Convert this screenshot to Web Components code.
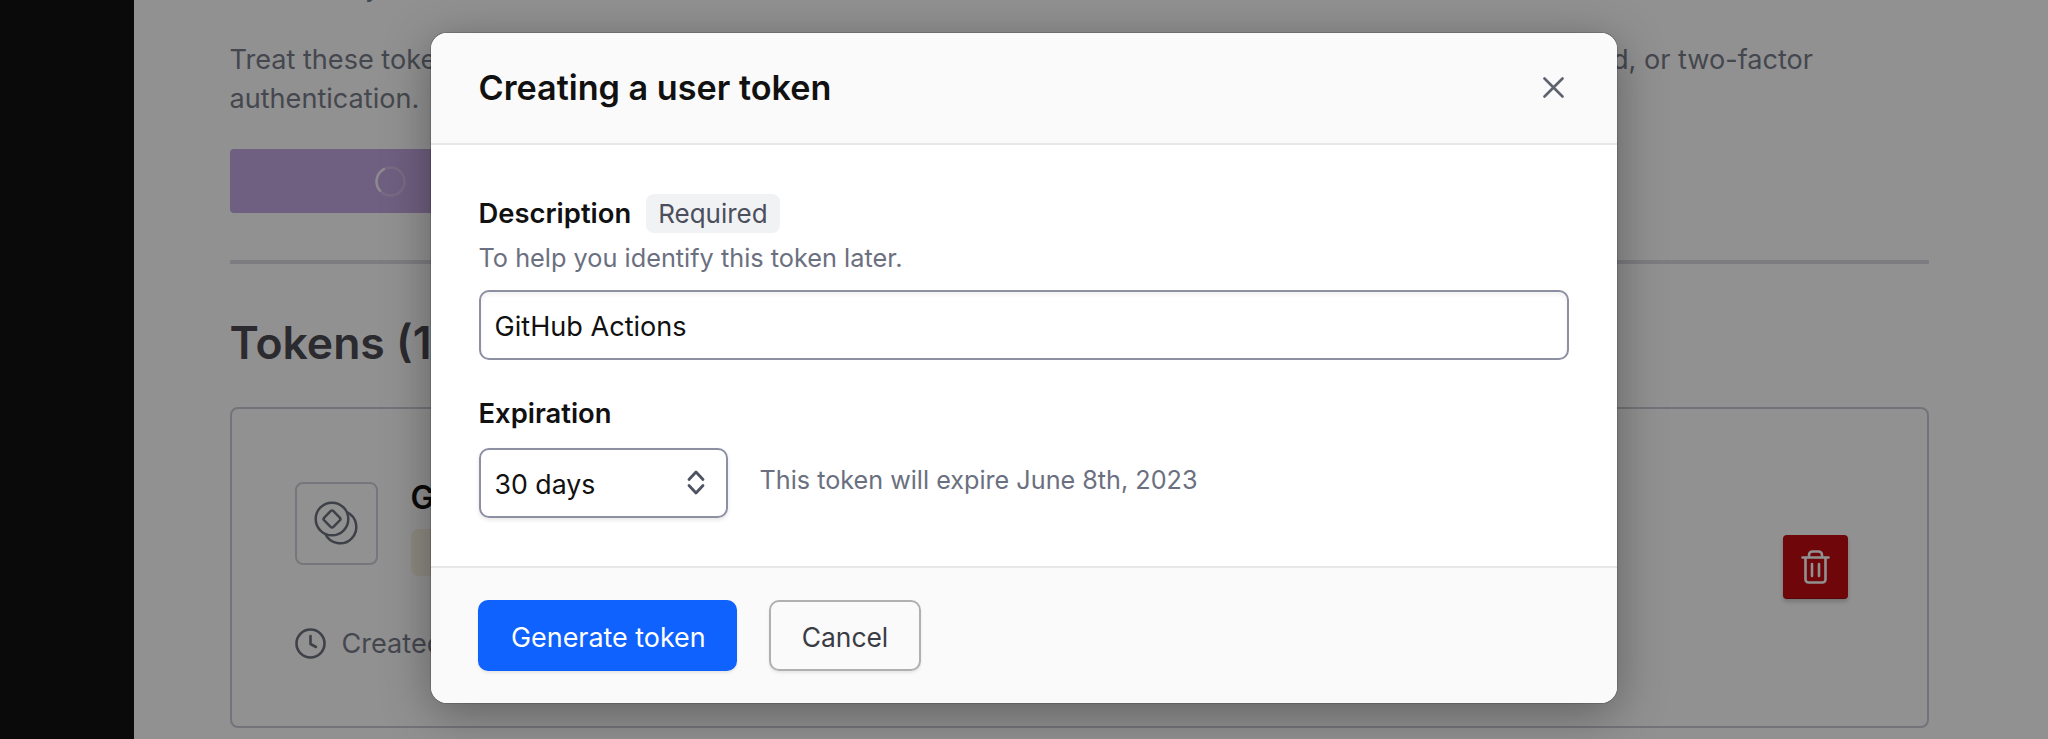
<!DOCTYPE html>
<html lang="en">
<head>
<meta charset="utf-8">
<title>User tokens</title>
<style>
  html, body { margin: 0; height: 100%; background: #fff; }
  body { font-family: Inter, "Liberation Sans", sans-serif; overflow: hidden; }
</style>
</head>
<body>
<token-app>
  <token-page></token-page>
  <token-modal slot="modal" heading="Creating a user token">
    <form-field label="Description" required hint="To help you identify this token later.">
      <text-box>GitHub Actions</text-box>
    </form-field>
    <form-field label="Expiration" class="second">
      <select-row note="This token will expire June 8th, 2023">30 days</select-row>
    </form-field>
    <modal-button slot="footer" variant="primary">Generate token</modal-button>
    <modal-button slot="footer" variant="plain">Cancel</modal-button>
  </token-modal>
</token-app>

<script>
const appTemplate = document.createElement('template');
appTemplate.innerHTML = `
  <style>
    :host { display: flex; position: relative; width: 2048px; height: 739px; overflow: hidden; background: #fff; }
    .sidebar { flex: none; width: 134px; background: #121215; }
    .content { flex: 1; min-width: 0; }
    .scrim {
      position: absolute;
      inset: 0;
      display: flex;
      justify-content: center;
      align-items: flex-start;
      padding-top: 32.5px;
      box-sizing: border-box;
      background: rgba(0, 0, 0, 0.43);
    }
  </style>
  <div class="sidebar"></div>
  <div class="content"><slot></slot></div>
  <div class="scrim"><slot name="modal"></slot></div>
`;

class TokenApp extends HTMLElement {
  constructor() {
    super();
    this.attachShadow({ mode: 'open' }).appendChild(appTemplate.content.cloneNode(true));
  }
}

const pageTemplate = document.createElement('template');
pageTemplate.innerHTML = `
  <style>
    :host { display: block; margin-top: -33.5px; padding: 0 119px 0 95.5px; color: #797d8b; font-size: 27.1px; line-height: 39px; }
    p { margin: 0; white-space: nowrap; }
    p + p { margin-top: 34px; }
    .intro { word-spacing: -1.5px; }
    .wide { letter-spacing: 0.15px; }
    .create {
      display: flex;
      align-items: center;
      justify-content: center;
      width: 322px;
      height: 64px;
      margin-top: 31.5px;
      border-radius: 4px;
      background: #c3a7e1;
    }
    .spinner { width: 31px; height: 31px; }
    hr { height: 4px; margin: 47px 0 49px; border: 0; background: #dcdce3; }
    h2 { margin: 0 0 33.5px; color: #4a4b54; font-size: 44.5px; line-height: 60px; font-weight: 600; }
  </style>
  <p class="intro">Tokens let you authenticate</p>
  <p>Treat these tokens <span class="wide">like passwords. They can be used to access your account without a username, passwor</span>d, or two-factor<br>authentication.</p>
  <div class="create">
    <svg class="spinner" viewBox="0 0 31 31" fill="none" stroke-width="2.5">
      <circle cx="15.5" cy="15.5" r="14" stroke="#fff" stroke-opacity=".25"/>
      <path d="M9 3.2A14 14 0 0 0 5 24.8" stroke="#fff" stroke-opacity=".8" stroke-linecap="round"/>
    </svg>
  </div>
  <hr>
  <h2>Tokens (1)</h2>
  <token-card name="GitHub Actions" badge="Expires in 30 days" created="Created May 9th, 2023"></token-card>
`;

class TokenPage extends HTMLElement {
  constructor() {
    super();
    this.attachShadow({ mode: 'open' }).appendChild(pageTemplate.content.cloneNode(true));
  }
}

const cardTemplate = document.createElement('template');
cardTemplate.innerHTML = `
  <style>
    :host {
      display: flex;
      justify-content: space-between;
      align-items: center;
      box-sizing: border-box;
      height: 321px;
      padding: 0 79px 0 63px;
      border: 2px solid #cbcbd5;
      border-radius: 8px;
    }
    .info { align-self: flex-start; padding-top: 73px; }
    .top { display: flex; gap: 33px; }
    .logo {
      display: flex;
      align-items: center;
      justify-content: center;
      box-sizing: border-box;
      width: 83px;
      height: 83px;
      border: 2px solid #d0d1da;
      border-radius: 8px;
      color: #6f7280;
    }
    .name { color: #121212; font-size: 32px; font-weight: 600; line-height: 39px; white-space: nowrap; margin-top: -4px; }
    .badge {
      display: inline-block;
      margin-top: 12px;
      padding: 4px 20px;
      border-radius: 8px;
      background: #f7f2e2;
      color: #b35c00;
      line-height: 39px;
      white-space: nowrap;
    }
    .created { display: flex; align-items: center; gap: 16px; margin-top: 48px; white-space: nowrap; }
    .created svg { color: #6f7280; }
    .delete {
      display: flex;
      align-items: center;
      justify-content: center;
      width: 65px;
      height: 64px;
      border-radius: 4px;
      background: #c30c13;
      box-shadow: inset 0 -1px 0 rgba(0, 0, 0, 0.2), 0 3px 4px rgba(0, 0, 0, 0.18);
      color: #fff;
    }
  </style>
  <div class="info">
    <div class="top">
      <div class="logo">
        <svg width="46" height="46" viewBox="0 0 46 46" fill="none" stroke="currentColor" stroke-width="2.5">
          <circle cx="19" cy="19" r="16.3"/>
          <path d="M33.81 12.19A16.3 16.3 0 1 1 12.19 33.81"/>
          <rect x="12.5" y="12.5" width="13" height="13" rx="2" transform="rotate(45 19 19)"/>
        </svg>
      </div>
      <div>
        <div class="name"></div>
        <span class="badge"></span>
      </div>
    </div>
    <div class="created">
      <svg width="31" height="31" viewBox="0 0 31 31" fill="none" stroke="currentColor" stroke-width="2.6" stroke-linecap="round" stroke-linejoin="round">
        <circle cx="15.5" cy="15.5" r="14"/>
        <path d="M15.5 8v8l5.5 3"/>
      </svg>
      <span class="when"></span>
    </div>
  </div>
  <div class="delete">
    <svg width="29" height="34" viewBox="0 0 29 34" fill="none" stroke="currentColor" stroke-width="2.6" stroke-linecap="round" stroke-linejoin="round">
      <path d="M1.5 7.5h26"/>
      <path d="M8 7V5a3.5 3.5 0 0 1 3.5-3.5h6A3.5 3.5 0 0 1 21 5v2"/>
      <path d="M4.5 8v21.5a3 3 0 0 0 3 3h14a3 3 0 0 0 3-3V8"/>
      <path d="M11 14v12M18 14v12"/>
    </svg>
  </div>
`;

class TokenCard extends HTMLElement {
  constructor() {
    super();
    this.attachShadow({ mode: 'open' }).appendChild(cardTemplate.content.cloneNode(true));
    this.shadowRoot.querySelector('.name').textContent = this.getAttribute('name');
    this.shadowRoot.querySelector('.badge').textContent = this.getAttribute('badge');
    this.shadowRoot.querySelector('.when').textContent = this.getAttribute('created');
  }
}

const modalTemplate = document.createElement('template');
modalTemplate.innerHTML = `
  <style>
    :host {
      display: block;
      width: 1186px;
      border-radius: 16px;
      overflow: hidden;
      background: #fff;
      box-shadow: 0 10px 48px rgba(0, 0, 0, 0.34), 0 0 0 1px rgba(0, 0, 0, 0.14);
    }
    header {
      display: flex;
      justify-content: space-between;
      align-items: center;
      box-sizing: border-box;
      height: 112px;
      padding: 0 53px 0 47.5px;
      border-bottom: 2px solid #e7e7e9;
      background: #fafafa;
    }
    h1 { margin: 0; color: #111; font-size: 34.2px; font-weight: 600; line-height: 46px; }
    .close { display: block; color: #5f6370; }
    main { padding: 49px 48px 48.5px 47.5px; }
    footer {
      display: flex;
      gap: 32px;
      padding: 32px 47px;
      border-top: 2px solid #e7e7e9;
      background: #fafafa;
    }
  </style>
  <header>
    <h1></h1>
    <svg class="close" width="21" height="21" viewBox="0 0 21 21" fill="none" stroke="currentColor" stroke-width="2.6" stroke-linecap="round">
      <path d="M1.5 1.5l18 18M19.5 1.5l-18 18"/>
    </svg>
  </header>
  <main><slot></slot></main>
  <footer><slot name="footer"></slot></footer>
`;

class TokenModal extends HTMLElement {
  constructor() {
    super();
    this.attachShadow({ mode: 'open' }).appendChild(modalTemplate.content.cloneNode(true));
    this.shadowRoot.querySelector('h1').textContent = this.getAttribute('heading');
  }
}

const fieldTemplate = document.createElement('template');
fieldTemplate.innerHTML = `
  <style>
    :host { display: block; }
    :host(.second) { margin-top: 33.5px; }
    .label { display: flex; align-items: center; gap: 15px; min-height: 39px; }
    .name { color: #111; font-size: 27.4px; font-weight: 600; line-height: 39px; }
    .required {
      padding: 0 12px;
      border-radius: 8px;
      background: #f1f2f4;
      color: #4b4f5c;
      font-size: 26px;
      line-height: 39px;
    }
    .hint { margin-top: 7px; color: #6b7080; font-size: 25.3px; line-height: 36px; }
    .control { margin-top: 14.5px; }
    :host(.second) .control { margin-top: 15px; }
    [hidden] { display: none; }
  </style>
  <div class="label"><span class="name"></span><span class="required" hidden>Required</span></div>
  <div class="hint" hidden></div>
  <div class="control"><slot></slot></div>
`;

class FormField extends HTMLElement {
  constructor() {
    super();
    const root = this.attachShadow({ mode: 'open' });
    root.appendChild(fieldTemplate.content.cloneNode(true));
    root.querySelector('.name').textContent = this.getAttribute('label');
    root.querySelector('.required').hidden = !this.hasAttribute('required');
    const hint = root.querySelector('.hint');
    if (this.hasAttribute('hint')) {
      hint.hidden = false;
      hint.textContent = this.getAttribute('hint');
    }
  }
}

const textBoxTemplate = document.createElement('template');
textBoxTemplate.innerHTML = `
  <style>
    :host {
      display: flex;
      align-items: center;
      box-sizing: border-box;
      height: 70px;
      padding: 2px 14px 0;
      border: 2px solid #8d90a3;
      border-radius: 10px;
      box-shadow: inset 0 3px 4px rgba(0, 0, 0, 0.05);
      color: #111;
      font-size: 27.1px;
    }
  </style>
  <slot></slot>
`;

class TextBox extends HTMLElement {
  constructor() {
    super();
    this.attachShadow({ mode: 'open' }).appendChild(textBoxTemplate.content.cloneNode(true));
  }
}

const selectTemplate = document.createElement('template');
selectTemplate.innerHTML = `
  <style>
    :host { display: flex; align-items: center; gap: 32px; }
    .select {
      display: flex;
      align-items: center;
      justify-content: space-between;
      box-sizing: border-box;
      width: 249px;
      height: 70px;
      padding: 0 21px 0 14px;
      border: 2px solid #8d90a3;
      border-radius: 10px;
      box-shadow: 0 2px 4px rgba(0, 0, 0, 0.1);
      color: #111;
      font-size: 26.7px;
    }
    .select span { padding-top: 2px; }
    .note { color: #6b7080; font-size: 25.2px; margin-top: -6px; }
  </style>
  <div class="select">
    <span><slot></slot></span>
    <svg width="18" height="25" viewBox="0 0 18 25" fill="none" stroke="#4f5260" stroke-width="2.8" stroke-linecap="round" stroke-linejoin="round">
      <path d="M2 9.5L9 2l7 7.5M2 15.5L9 23l7-7.5"/>
    </svg>
  </div>
  <span class="note"></span>
`;

class SelectRow extends HTMLElement {
  constructor() {
    super();
    this.attachShadow({ mode: 'open' }).appendChild(selectTemplate.content.cloneNode(true));
    this.shadowRoot.querySelector('.note').textContent = this.getAttribute('note');
  }
}

const buttonTemplate = document.createElement('template');
buttonTemplate.innerHTML = `
  <style>
    :host {
      display: flex;
      align-items: center;
      justify-content: center;
      box-sizing: border-box;
      height: 71px;
      padding: 2px 31px 0;
      border: 2px solid #b0b0b3;
      border-radius: 10px;
      box-shadow: 0 2px 3px rgba(0, 0, 0, 0.08);
      color: #3a3c45;
      font-size: 26.4px;
    }
    :host([variant="primary"]) {
      padding-right: 29px;
      border-color: #0f62fe;
      background: #0f62fe;
      color: #fff;
      font-size: 26.9px;
    }
  </style>
  <slot></slot>
`;

class ModalButton extends HTMLElement {
  constructor() {
    super();
    this.attachShadow({ mode: 'open' }).appendChild(buttonTemplate.content.cloneNode(true));
  }
}

customElements.define('token-app', TokenApp);
customElements.define('token-page', TokenPage);
customElements.define('token-card', TokenCard);
customElements.define('token-modal', TokenModal);
customElements.define('form-field', FormField);
customElements.define('text-box', TextBox);
customElements.define('select-row', SelectRow);
customElements.define('modal-button', ModalButton);
</script>
</body>
</html>
